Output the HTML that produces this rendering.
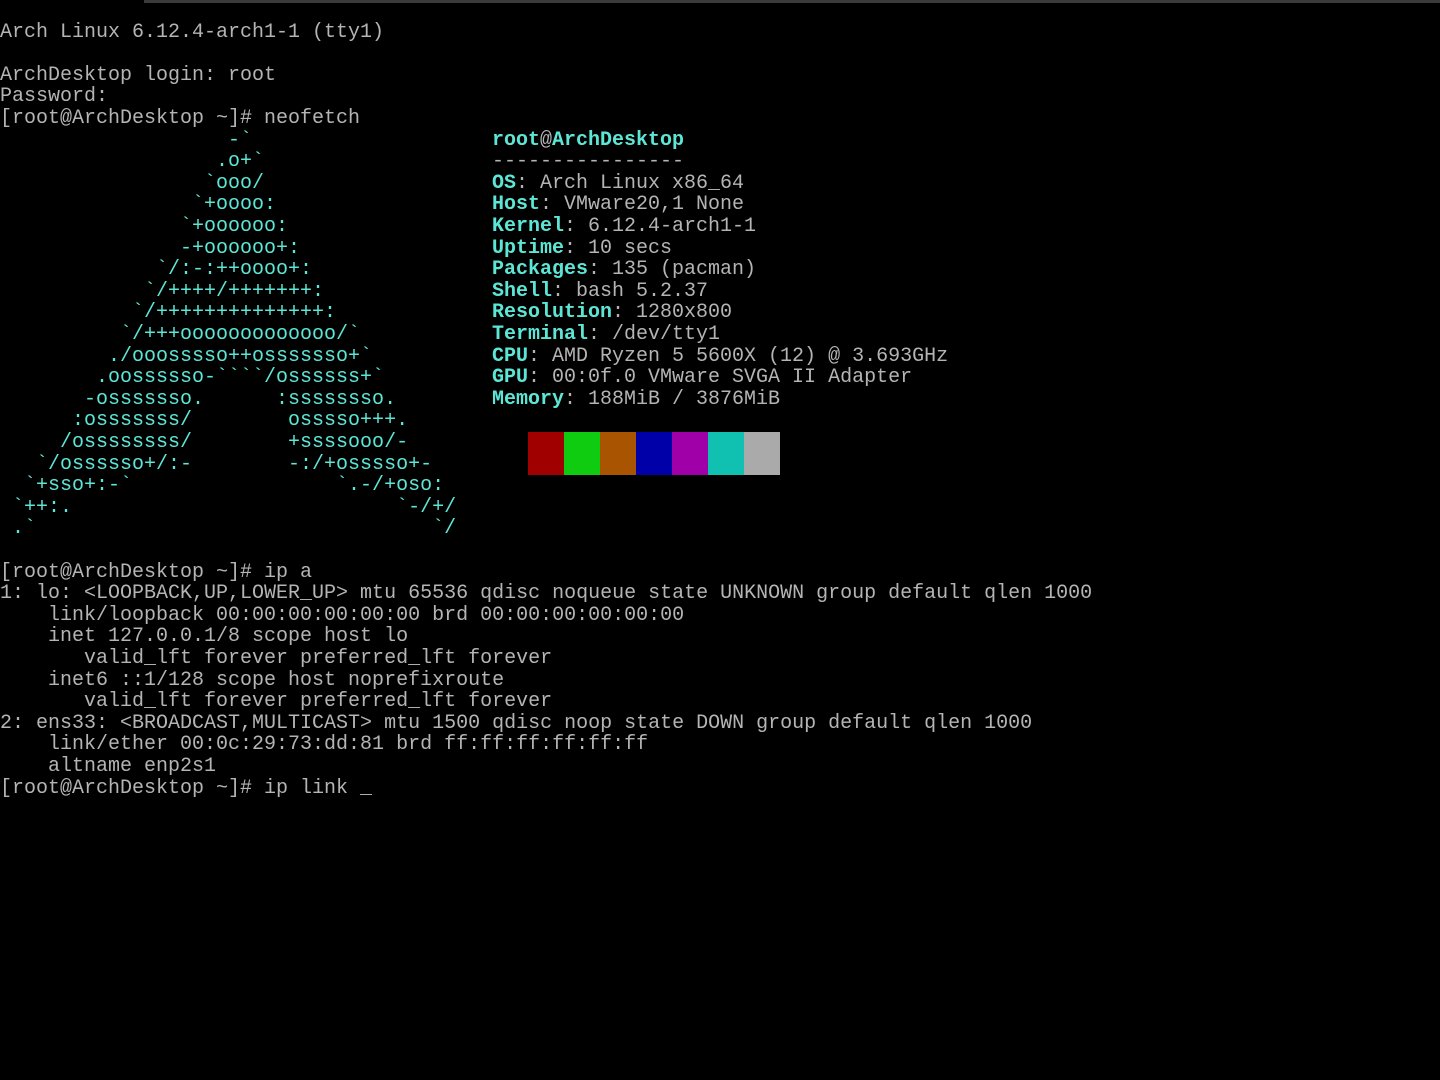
<!DOCTYPE html>
<html><head><meta charset="utf-8"><style>
html,body{margin:0;padding:0;background:#000;width:1440px;height:1080px;overflow:hidden;position:relative}
pre{position:absolute;margin:0;font-family:"Liberation Mono",monospace;font-size:20px;line-height:21.6px;color:#b4b4b4;white-space:pre}
.c{color:#5ce6d6}
.b{color:#5ce6d6;font-weight:bold}
.bar{position:absolute;left:144px;top:0;width:1296px;height:3px;background:#3a3a3a}
.sw{position:absolute;top:432px;height:43px;width:36px}
</style></head><body>
<div class="bar"></div>
<pre style="left:0;top:21.6px">Arch Linux 6.12.4-arch1-1 (tty1)

ArchDesktop login: root
Password:
[root@ArchDesktop ~]# neofetch</pre>
<pre class="c" style="left:0;top:129.6px">                   -&#96;
                  .o+&#96;
                 &#96;ooo/
                &#96;+oooo:
               &#96;+oooooo:
               -+oooooo+:
             &#96;/:-:++oooo+:
            &#96;/++++/+++++++:
           &#96;/++++++++++++++:
          &#96;/+++ooooooooooooo/&#96;
         ./ooosssso++osssssso+&#96;
        .oossssso-&#96;&#96;&#96;&#96;/ossssss+&#96;
       -osssssso.      :ssssssso.
      :osssssss/        osssso+++.
     /ossssssss/        +ssssooo/-
   &#96;/ossssso+/:-        -:/+osssso+-
  &#96;+sso+:-&#96;                 &#96;.-/+oso:
 &#96;++:.                           &#96;-/+/
 .&#96;                                 &#96;/</pre>
<pre style="left:492px;top:129.6px"><span class="b">root</span>@<span class="b">ArchDesktop</span>
----------------
<span class="b">OS</span>: Arch Linux x86_64
<span class="b">Host</span>: VMware20,1 None
<span class="b">Kernel</span>: 6.12.4-arch1-1
<span class="b">Uptime</span>: 10 secs
<span class="b">Packages</span>: 135 (pacman)
<span class="b">Shell</span>: bash 5.2.37
<span class="b">Resolution</span>: 1280x800
<span class="b">Terminal</span>: /dev/tty1
<span class="b">CPU</span>: AMD Ryzen 5 5600X (12) @ 3.693GHz
<span class="b">GPU</span>: 00:0f.0 VMware SVGA II Adapter
<span class="b">Memory</span>: 188MiB / 3876MiB</pre>
<div class="sw" style="left:528px;background:#a00000"></div>
<div class="sw" style="left:564px;background:#10cc10"></div>
<div class="sw" style="left:600px;background:#a85400"></div>
<div class="sw" style="left:636px;background:#0000a8"></div>
<div class="sw" style="left:672px;background:#a000a8"></div>
<div class="sw" style="left:708px;background:#10c0b0"></div>
<div class="sw" style="left:744px;background:#aaaaaa"></div>
<pre style="left:0;top:561.6px">[root@ArchDesktop ~]# ip a
1: lo: &lt;LOOPBACK,UP,LOWER_UP&gt; mtu 65536 qdisc noqueue state UNKNOWN group default qlen 1000
    link/loopback 00:00:00:00:00:00 brd 00:00:00:00:00:00
    inet 127.0.0.1/8 scope host lo
       valid_lft forever preferred_lft forever
    inet6 ::1/128 scope host noprefixroute
       valid_lft forever preferred_lft forever
2: ens33: &lt;BROADCAST,MULTICAST&gt; mtu 1500 qdisc noop state DOWN group default qlen 1000
    link/ether 00:0c:29:73:dd:81 brd ff:ff:ff:ff:ff:ff
    altname enp2s1
[root@ArchDesktop ~]# ip link _</pre>
</body></html>
